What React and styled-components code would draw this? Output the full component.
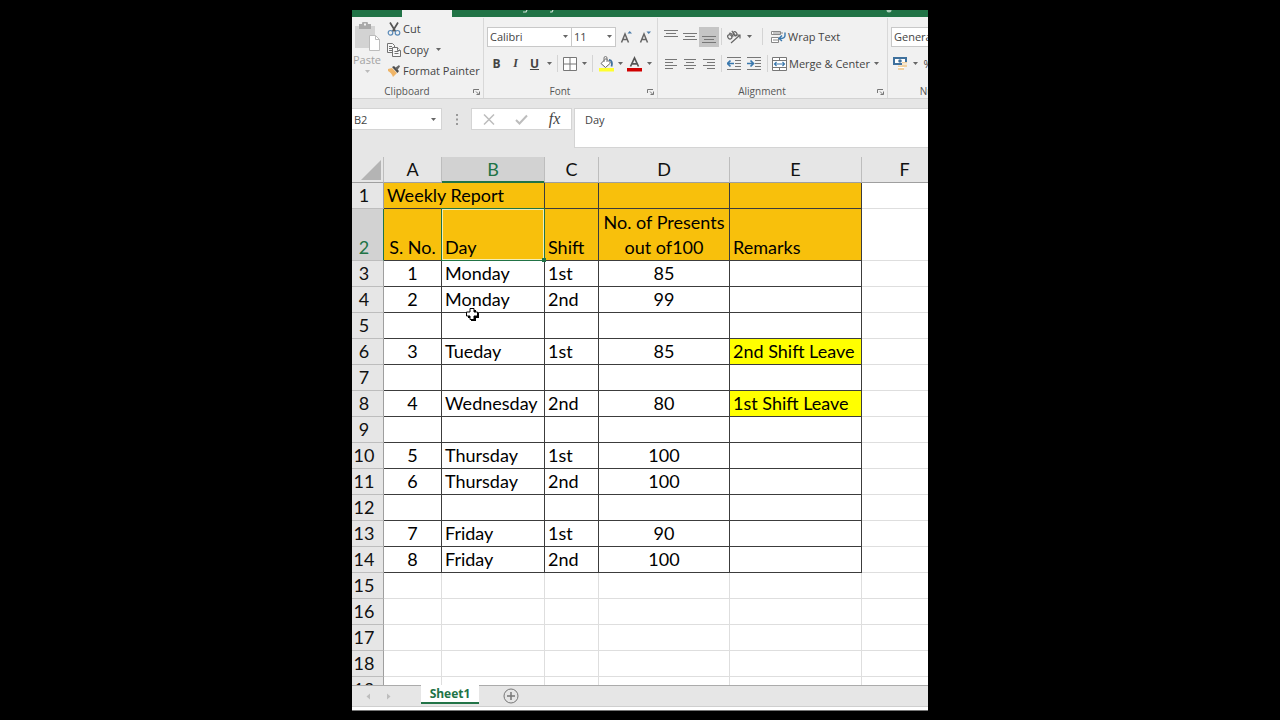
import React from 'react'
import styled, { createGlobalStyle, css } from 'styled-components'

const GlobalStyle = createGlobalStyle`
  * { box-sizing: border-box; }
  body { margin: 0; background: #000; }
  button, input, select { font: inherit; color: inherit; }
`

const Stage = styled.div`
  display: flex;
  justify-content: center;
  height: 100vh;
  padding: 10px 0 9px;
  background: #000;
`
const Window = styled.main`
  display: flex;
  flex-direction: column;
  width: 45%;
  overflow: hidden;
  background: #e6e6e6;
  color: #444;
  font-family: 'Open Sans', 'Noto Sans', sans-serif;
  font-size: 11px;
`

const TabStrip = styled.div`
  display: flex;
  flex: none;
  height: 7px;
  padding-left: 50px;
  background: #217346;
  overflow: hidden;
`
const ActiveTab = styled.div`
  width: 50px;
  background: #f1f1f1;
`
const StripMarks = styled.svg`
  flex: 1;
`

const Ribbon = styled.div`
  display: flex;
  flex: none;
  height: 82px;
  padding-top: 1px;
  background: #f1f1f1;
  border-bottom: 1px solid #d2d2d2;
  overflow: hidden;
`
const Group = styled.section`
  display: flex;
  flex: none;
  flex-direction: column;
  width: ${(p) => p.$width}px;
  height: 80px;
  border-right: 1px solid #d8d8d8;
`
const GroupBody = styled.div`
  display: flex;
  flex: 1;
  padding: 0 3px;
`
const GroupFooter = styled.div`
  display: flex;
  align-items: center;
  height: 13px;
  padding-right: 2px;
  line-height: 13px;
  font-size: 10px;
  color: #555;
`
const GroupLabel = styled.span`
  flex: 1;
  padding-right: 10px;
  text-align: center;
`
const Rows = styled.div`
  display: flex;
  flex: 1;
  flex-direction: column;
  padding-top: 5px;
`
const ToolRow = styled.div`
  display: flex;
  align-items: center;
  height: 27px;
`
const Tool = styled.button`
  display: flex;
  flex: none;
  align-items: center;
  justify-content: ${(p) => (p.$start ? 'flex-start' : 'center')};
  gap: 2px;
  width: ${(p) => (p.$width ? `${p.$width}px` : 'auto')};
  height: 20px;
  padding: 0;
  border: 0;
  background: ${(p) => (p.$on ? '#c5c5c5' : 'transparent')};
  white-space: nowrap;
`
const Letter = styled.span`
  font-family: ${(p) => (p.$serif ? "'Liberation Serif', serif" : 'inherit')};
  font-size: 12px;
  font-weight: 700;
  font-style: ${(p) => (p.$serif ? 'italic' : 'normal')};
  text-decoration: ${(p) => (p.$underline ? 'underline' : 'none')};
`
const Divider = styled.span`
  flex: none;
  width: 1px;
  height: 17px;
  margin: 0 ${(p) => p.$gap}px;
  background: #d4d4d4;
`
const PasteButton = styled.button`
  display: flex;
  flex-direction: column;
  align-items: center;
  width: 32px;
  margin-left: -4px;
  padding: 4px 0 0;
  border: 0;
  background: transparent;
  color: #a3a3a3;
  line-height: 18px;
`
const ClipList = styled.div`
  display: flex;
  flex-direction: column;
  padding-left: 4px;
`
const ClipButton = styled.button`
  display: flex;
  align-items: center;
  gap: 2px;
  height: 21px;
  padding: 0;
  border: 0;
  background: transparent;
  white-space: nowrap;
`
const ArrowGap = styled.span`
  display: flex;
  padding-left: 4px;
`

const SelectBox = styled.span`
  display: grid;
  flex: none;
  align-items: center;
  width: ${(p) => p.$width}px;
  height: 20px;
  background: #fff;
  border: 1px solid #c8c8c8;
  & + & { border-left: 0; }
  select, svg { grid-area: 1 / 1; }
  select {
    appearance: none;
    width: 100%;
    height: 18px;
    padding: 0 2px;
    border: 0;
    background: transparent;
  }
  svg { justify-self: end; margin-right: 2px; pointer-events: none; }
`

const FormulaRow = styled.div`
  display: flex;
  flex: none;
  align-items: flex-start;
  height: 58px;
  padding-top: 9px;
`
const NameBox = styled.div`
  display: flex;
  width: 90px;
  height: 22px;
  background: #fff;
  border: 1px solid #d4d4d4;
  border-left: 0;
  input {
    flex: 1;
    min-width: 0;
    padding: 0 2px;
    border: 0;
    background: transparent;
  }
`
const Dots = styled.span`
  display: flex;
  justify-content: center;
  align-items: center;
  width: 29px;
  height: 22px;
`
const FormulaTools = styled.div`
  display: flex;
  justify-content: space-around;
  width: 101px;
  height: 22px;
  background: #fff;
  border: 1px solid #d4d4d4;
`
const FxLabel = styled.span`
  font-family: 'Liberation Serif', serif;
  font-size: 16px;
  font-style: italic;
  line-height: 16px;
`
const FormulaInput = styled.input`
  flex: 1;
  min-width: 0;
  height: 40px;
  margin: 0 0 0 2px;
  padding: 0 10px 18px;
  border: 1px solid #d4d4d4;
  border-right: 0;
  background: #fff;
`

const SheetArea = styled.div`
  position: relative;
  flex: 1;
  min-height: 0;
  overflow: hidden;
  background: #fff;
`
const Sheet = styled.table`
  table-layout: fixed;
  width: max(100%, 596px);
  border-collapse: separate;
  border-spacing: 0;
  color: #000;
  font-family: Lato, 'Open Sans', sans-serif;
  font-size: 18px;
  line-height: 25px;
`
const ColHead = styled.th`
  height: 26px;
  padding: 0;
  font-weight: 400;
  background: ${(p) => (p.$active ? '#d2d2d2' : '#e6e6e6')};
  color: ${(p) => (p.$active ? '#217346' : '#111')};
  border-right: 1px solid #bdbdbd;
  border-bottom: 1px solid ${(p) => (p.$active ? '#217346' : '#9f9f9f')};
  box-shadow: ${(p) => (p.$active ? 'inset 0 -1px #217346' : 'none')};
`
const Corner = styled(ColHead)`
  svg { display: block; margin-left: 9px; }
`
const RowHead = styled.th`
  height: 26px;
  padding: 0 7px 0 0;
  font-weight: 400;
  vertical-align: bottom;
  background: ${(p) => (p.$active ? '#d2d2d2' : '#e6e6e6')};
  color: ${(p) => (p.$active ? '#217346' : '#111')};
  border-right: 1px solid ${(p) => (p.$active ? '#217346' : '#9f9f9f')};
  border-bottom: 1px solid #bdbdbd;
`
const Cell = styled.td`
  position: relative;
  height: 26px;
  padding: 0 3px;
  vertical-align: bottom;
  white-space: nowrap;
  text-align: ${(p) => (p.$center ? 'center' : 'left')};
  border-right: 1px solid #dedede;
  border-bottom: 1px solid #dedede;
  ${(p) => p.$boxed && css`
    border-color: #3c3c3c;
  `}
  ${(p) => p.$fill && css`
    background: ${p.$fill};
  `}
`
const HeadingRow = styled.tr`
  height: 52px;
`
const Selection = styled.span`
  position: absolute;
  z-index: 1;
  inset: -1px;
  border: 1px solid #217346;
  box-shadow: inset 0 0 0 1px #f3eeb4;
  &::after {
    content: '';
    position: absolute;
    right: -2px;
    bottom: -2px;
    width: 4px;
    height: 4px;
    background: #217346;
  }
`
const Cursor = styled.svg`
  position: absolute;
  z-index: 2;
  left: 113px;
  top: 150px;
`

const SheetBar = styled.div`
  display: flex;
  flex: none;
  align-items: flex-start;
  height: 22px;
  padding-left: 6px;
  background: #e6e6e6;
  border-top: 1px solid #ababab;
  border-bottom: 1px solid #cfcfcf;
`
const SheetNav = styled.button`
  display: flex;
  align-items: center;
  justify-content: center;
  width: 20px;
  height: 20px;
  padding: 0;
  border: 0;
  background: transparent;
`
const SheetTab = styled.button`
  width: 58px;
  height: 19px;
  margin: -1px 22px 0 23px;
  padding: 0;
  border: 0;
  border-bottom: 2px solid #217346;
  background: #fff;
  color: #217346;
  font-size: 12px;
  font-weight: 700;
  line-height: 16px;
`
const StatusEdge = styled.div`
  flex: none;
  height: 4px;
  background: #fff;
  border-bottom: 1px solid #777;
`

const Arrow = ({ color = '#666' }) => (
  <svg width="7" height="5" viewBox="0 0 7 5"><path d="M1 1h5L3.500 4z" fill={color} /></svg>
)

const Launcher = () => (
  <Tool $width={9} aria-label="More options">
    <svg width="8" height="8" viewBox="0 0 8 8" fill="none" stroke="#777">
      <path d="M.5 5V1.500H6M3 3.500l3 3M6.500 3.500v3h-3" />
    </svg>
  </Tool>
)

const PasteIcon = () => (
  <svg width="26" height="29" viewBox="0 0 26 29">
    <path d="M1 4h20v22H1z" fill="#d3d3d3" />
    <path d="M5 2h3a3 3 0 0 1 6 0h3v5H5z" fill="#a9a9a9" />
    <path d="M10 1.500h2v2h-2z" fill="#f1f1f1" />
    <path d="M15.500 13.500h6l4 4v11h-10z" fill="#fff" stroke="#bcbcbc" />
    <path d="M21.500 13.500v4h4" fill="none" stroke="#bcbcbc" />
  </svg>
)
const CutIcon = () => (
  <svg width="14" height="14" viewBox="0 0 14 14" fill="none">
    <path d="M3 0.500l5.500 9M11 .5l-5.500 9" stroke="#555" strokeWidth="1.700" />
    <circle cx="3.500" cy="10.800" r="2.300" stroke="#5a8ab8" strokeWidth="1.200" />
    <circle cx="10.500" cy="10.800" r="2.300" stroke="#5a8ab8" strokeWidth="1.200" />
  </svg>
)
const CopyIcon = () => (
  <svg width="14" height="14" viewBox="0 0 14 14" fill="#f8f8f8" stroke="#737373">
    <path d="M.5.5h5l2 2v7h-7z" />
    <path d="M2 3.500h3M2 5.500h3M2 7.500h3" />
    <path d="M5.500 4.500h5l3 3v6h-8z" />
    <path d="M10.500 4.500v3h3M7.500 8.500h4M7.500 10.500h4" />
  </svg>
)
const BrushIcon = () => (
  <svg width="14" height="14" viewBox="0 0 14 14">
    <path d="M1 5l4-1 5 5-4 4C5 10 3 8 1 7z" fill="#efb568" />
    <path d="M5 3l2-1 5 5-1.500 2z" fill="#4b4b4b" />
    <path d="M8 4l4-3 1 1.500-3 4z" fill="#666" />
  </svg>
)
const FontSizeIcon = ({ down }) => (
  <svg width="13" height="14" viewBox="0 0 13 14" fill="none">
    <path d="M1.500 12.500L5 4l3.500 8.500M2.700 9.500h4.600" stroke="#666" strokeWidth="1.500" />
    <path d={down ? 'M7.500 1.500h4.500L9.700 4z' : 'M7.500 3.500h4.500L9.700 1z'} fill="#4a7ba8" />
  </svg>
)
const BordersIcon = () => (
  <svg width="14" height="14" viewBox="0 0 14 14" fill="#fff" stroke="#777">
    <path d="M.5.5h13v13H.5zM7 .5v13M.5 7h13" />
  </svg>
)
const FillIcon = () => (
  <svg width="16" height="16" viewBox="0 0 16 16" fill="none">
    <path d="M3 7.500l5-5 4.500 4.500-5 4.500z" fill="#fff" stroke="#666" />
    <path d="M6 6V2a1.500 1.500 0 0 1 3 0v4" stroke="#777" />
    <path d="M11 4c3 0 3.500 3 2.500 6.500" stroke="#41719c" strokeWidth="1.800" />
    <path d="M1 12h15v3.500H1z" fill="#ffff2e" />
  </svg>
)
const FontColorIcon = () => (
  <svg width="15" height="16" viewBox="0 0 15 16" fill="none">
    <path d="M3.500 10.500L7.500 2l4 8.500M5 7.800h5" stroke="#555" strokeWidth="1.700" />
    <path d="M0 12h15v3.500H0z" fill="#d00000" />
  </svg>
)
const LinesIcon = ({ d }) => (
  <svg width="14" height="14" viewBox="0 0 14 14" stroke="#777"><path d={d} /></svg>
)
const OrientIcon = () => (
  <svg width="16" height="14" viewBox="0 0 16 14" fill="none" stroke="#666" strokeWidth="1.200">
    <ellipse cx="3.800" cy="6.800" rx="1.900" ry="2.300" transform="rotate(-40 3.800 6.800)" />
    <path d="M3 3.500c1.500-1 2.500 0 4.200 3.200M5.800.8l4 5" />
    <ellipse cx="9" cy="3.800" rx="1.700" ry="2.200" transform="rotate(-40 9 3.800)" />
    <path d="M5 13L14 5M14 8.500V5h-3.500" />
  </svg>
)
const IndentIcon = ({ right }) => (
  <svg width="14" height="13" viewBox="0 0 14 13" fill="none">
    <path d="M0 .5h14M8 3.500h6M8 6.500h6M8 9.500h6M0 12.500h14" stroke="#777" />
    <path d={right ? 'M0 6.500h6M3.500 3.500l3 3-3 3' : 'M7 6.500H1M3.500 3.500l-3 3 3 3'} stroke="#3a78ad" strokeWidth="1.700" />
  </svg>
)
const WrapIcon = () => (
  <svg width="15" height="14" viewBox="0 0 15 14" fill="none">
    <path d="M.5 1.500h9v3h-9zM.5 7.500h7v5h-7z" fill="#fff" stroke="#888" />
    <path d="M2 3h10M2 10h5" stroke="#888" />
    <path d="M14 2.500v3c0 2-1 3-5 3M11 5.500l-3 3 3 2.500" stroke="#3a78ad" strokeWidth="1.400" />
  </svg>
)
const MergeIcon = () => (
  <svg width="15" height="14" viewBox="0 0 15 14" fill="none">
    <path d="M.5.5h14v13H.5zM.5 3.500h14M.5 10.500h14M7.500.5v3M7.500 10.500v3" fill="#fff" stroke="#777" />
    <path d="M2 7h11M4.500 5L2.500 7l2 2M10.500 5l2 2-2 2" stroke="#3a78ad" strokeWidth="1.200" />
  </svg>
)
const MoneyIcon = () => (
  <svg width="15" height="15" viewBox="0 0 15 15" fill="none">
    <path d="M1 2h12v6H1z" fill="#fff" stroke="#3f719d" strokeWidth="2" />
    <circle cx="7" cy="5" r="1.800" fill="#3f719d" />
    <path d="M9 6h5v5H9zM5 9.500h6V14H5z" fill="#f0d0a0" />
    <path d="M9 8h5M5 11.500h6" stroke="#fff" />
  </svg>
)

const GOLD = '#f8c00c'
const YELLOW = '#ffff00'
const COLUMNS = ['A', 'B', 'C', 'D', 'E', 'F']
const WIDTHS = [32, 58, 103, 54, 131, 132]

// one entry per sheet row, from row 3 down: s. no., day, shift, presents, remarks
const RECORDS = [
  ['1', 'Monday', '1st', '85', ''],
  ['2', 'Monday', '2nd', '99', ''],
  ['', '', '', '', ''],
  ['3', 'Tueday', '1st', '85', '2nd Shift Leave'],
  ['', '', '', '', ''],
  ['4', 'Wednesday', '2nd', '80', '1st Shift Leave'],
  ['', '', '', '', ''],
  ['5', 'Thursday', '1st', '100', ''],
  ['6', 'Thursday', '2nd', '100', ''],
  ['', '', '', '', ''],
  ['7', 'Friday', '1st', '90', ''],
  ['8', 'Friday', '2nd', '100', ''],
]
const EMPTY_ROWS = [15, 16, 17, 18, 19]

const ClipboardGroup = () => (
  <Group $width={132}>
    <GroupBody>
      <PasteButton>
        <PasteIcon />
        Paste
        <Arrow color="#bbb" />
      </PasteButton>
      <ClipList>
        <ClipButton><CutIcon />Cut</ClipButton>
        <ClipButton><CopyIcon />Copy<ArrowGap><Arrow /></ArrowGap></ClipButton>
        <ClipButton><BrushIcon />Format Painter</ClipButton>
      </ClipList>
    </GroupBody>
    <GroupFooter><GroupLabel>Clipboard</GroupLabel><Launcher /></GroupFooter>
  </Group>
)

const FontGroup = () => (
  <Group $width={174}>
    <GroupBody>
      <Rows>
        <ToolRow>
          <SelectBox $width={85}>
            <select aria-label="Font"><option>Calibri</option></select>
            <Arrow />
          </SelectBox>
          <SelectBox $width={44}>
            <select aria-label="Font size"><option>11</option></select>
            <Arrow />
          </SelectBox>
          <Tool $width={20} aria-label="Increase font size"><FontSizeIcon /></Tool>
          <Tool $width={18} aria-label="Decrease font size"><FontSizeIcon down /></Tool>
        </ToolRow>
        <ToolRow>
          <Tool $width={19}><Letter>B</Letter></Tool>
          <Tool $width={19}><Letter $serif>I</Letter></Tool>
          <Tool $width={19}><Letter $underline>U</Letter></Tool>
          <Tool $width={10} aria-label="Underline styles"><Arrow /></Tool>
          <Divider $gap={3} />
          <Tool $width={18} aria-label="Borders"><BordersIcon /></Tool>
          <Tool $width={10} aria-label="Border styles"><Arrow /></Tool>
          <Divider $gap={3} />
          <Tool $width={19} aria-label="Fill color"><FillIcon /></Tool>
          <Tool $width={10} aria-label="Fill colors"><Arrow /></Tool>
          <Tool $width={19} aria-label="Font color"><FontColorIcon /></Tool>
          <Tool $width={10} aria-label="Font colors"><Arrow /></Tool>
        </ToolRow>
      </Rows>
    </GroupBody>
    <GroupFooter><GroupLabel>Font</GroupLabel><Launcher /></GroupFooter>
  </Group>
)

const AlignmentGroup = () => (
  <Group $width={230}>
    <GroupBody>
      <Rows>
        <ToolRow>
          <Tool $width={19} aria-label="Top align"><LinesIcon d="M0 .5h14M2 3.500h10M0 6.500h14" /></Tool>
          <Tool $width={19} aria-label="Middle align"><LinesIcon d="M0 3.500h14M2 6.500h10M0 9.500h14" /></Tool>
          <Tool $width={20} $on aria-label="Bottom align"><LinesIcon d="M0 6.500h14M2 9.500h10M0 12.500h14" /></Tool>
          <Divider $gap={2} />
          <Tool $width={20} aria-label="Orientation"><OrientIcon /></Tool>
          <Tool $width={10} aria-label="Orientation styles"><Arrow /></Tool>
          <Divider $gap={8} />
          <Tool $start><WrapIcon />Wrap Text</Tool>
        </ToolRow>
        <ToolRow>
          <Tool $width={19} aria-label="Align left"><LinesIcon d="M1 2.500h12M1 5.500h8M1 8.500h12M1 11.500h8" /></Tool>
          <Tool $width={19} aria-label="Center"><LinesIcon d="M1 2.500h12M3 5.500h8M1 8.500h12M3 11.500h8" /></Tool>
          <Tool $width={20} aria-label="Align right"><LinesIcon d="M1 2.500h12M5 5.500h8M1 8.500h12M5 11.500h8" /></Tool>
          <Divider $gap={2} />
          <Tool $width={20} aria-label="Decrease indent"><IndentIcon /></Tool>
          <Tool $width={19} aria-label="Increase indent"><IndentIcon right /></Tool>
          <Divider $gap={4} />
          <Tool $start><MergeIcon />Merge &amp; Center</Tool>
          <Tool $width={14} aria-label="Merge options"><Arrow /></Tool>
        </ToolRow>
      </Rows>
    </GroupBody>
    <GroupFooter><GroupLabel>Alignment</GroupLabel><Launcher /></GroupFooter>
  </Group>
)

const NumberGroup = () => (
  <Group $width={124}>
    <GroupBody>
      <Rows>
        <ToolRow>
          <SelectBox $width={96}>
            <select aria-label="Number format"><option>General</option></select>
            <Arrow />
          </SelectBox>
        </ToolRow>
        <ToolRow>
          <Tool $width={18} aria-label="Accounting format"><MoneyIcon /></Tool>
          <Tool $width={12} aria-label="Currencies"><Arrow /></Tool>
          <Tool $width={14}>%</Tool>
        </ToolRow>
      </Rows>
    </GroupBody>
    <GroupFooter><GroupLabel>Number</GroupLabel><Launcher /></GroupFooter>
  </Group>
)

const FormulaBar = () => (
  <FormulaRow>
    <NameBox>
      <input aria-label="Name box" defaultValue="B2" />
      <Tool $width={16} aria-label="Names"><Arrow /></Tool>
    </NameBox>
    <Dots>
      <svg width="2" height="11" viewBox="0 0 2 11" fill="#999">
        <path d="M0 0h2v2H0zM0 4.500h2v2H0zM0 9h2v2H0z" />
      </svg>
    </Dots>
    <FormulaTools>
      <Tool $width={20} aria-label="Cancel">
        <svg width="12" height="11" viewBox="0 0 12 11" stroke="#bdbdbd" strokeWidth="1.500"><path d="M1 .5l10 10M11 .5l-10 10" /></svg>
      </Tool>
      <Tool $width={20} aria-label="Enter">
        <svg width="13" height="11" viewBox="0 0 13 11" fill="none" stroke="#bdbdbd" strokeWidth="2"><path d="M1 6l3.500 3.500L12 1.500" /></svg>
      </Tool>
      <Tool $width={20} aria-label="Insert function"><FxLabel>fx</FxLabel></Tool>
    </FormulaTools>
    <FormulaInput aria-label="Formula" defaultValue="Day" />
  </FormulaRow>
)

const SheetGrid = () => (
  <Sheet>
    <colgroup>
      {WIDTHS.map((w, i) => <col key={i} width={w} />)}
      <col />
    </colgroup>
    <thead>
      <tr>
        <Corner>
          <svg width="20" height="20" viewBox="0 0 20 20"><path d="M20 0v20H0z" fill="#b4b4b4" /></svg>
        </Corner>
        {COLUMNS.map((c) => <ColHead key={c} $active={c === 'B'}>{c}</ColHead>)}
      </tr>
    </thead>
    <tbody>
      <tr>
        <RowHead>1</RowHead>
        <Cell $boxed $fill={GOLD} colSpan={2}>Weekly Report</Cell>
        <Cell $boxed $fill={GOLD} />
        <Cell $boxed $fill={GOLD} />
        <Cell $boxed $fill={GOLD} />
        <Cell />
      </tr>
      <HeadingRow>
        <RowHead $active>2</RowHead>
        <Cell $boxed $fill={GOLD} $center>S. No.</Cell>
        <Cell $boxed $fill={GOLD}>Day<Selection /></Cell>
        <Cell $boxed $fill={GOLD}>Shift</Cell>
        <Cell $boxed $fill={GOLD} $center>No. of Presents<br />out of100</Cell>
        <Cell $boxed $fill={GOLD}>Remarks</Cell>
        <Cell />
      </HeadingRow>
      {RECORDS.map(([no, day, shift, presents, remarks], i) => (
        <tr key={i}>
          <RowHead>{i + 3}</RowHead>
          <Cell $boxed $center>{no}</Cell>
          <Cell $boxed>{day}</Cell>
          <Cell $boxed>{shift}</Cell>
          <Cell $boxed $center>{presents}</Cell>
          <Cell $boxed $fill={remarks && YELLOW}>{remarks}</Cell>
          <Cell />
        </tr>
      ))}
      {EMPTY_ROWS.map((n) => (
        <tr key={n}>
          <RowHead>{n}</RowHead>
          {COLUMNS.map((c) => <Cell key={c} />)}
        </tr>
      ))}
    </tbody>
  </Sheet>
)

const App = () => {
  return (
    <>
      <GlobalStyle />
      <Stage>
        <Window>
          <TabStrip>
            <ActiveTab />
            <StripMarks height="7">
              <path d="M71 2h3l1-2M98 2h2l1-2" fill="none" stroke="#cfe3d7" strokeWidth="1.200" />
              <circle cx="437" cy="0" r="2.500" fill="#a8cdb8" />
            </StripMarks>
          </TabStrip>
          <Ribbon>
            <ClipboardGroup />
            <FontGroup />
            <AlignmentGroup />
            <NumberGroup />
          </Ribbon>
          <FormulaBar />
          <SheetArea>
            <SheetGrid />
            <Cursor width="15" height="15" viewBox="0 0 15 15">
              <path d="M5 2h5v3h3v5h-3v3H5v-3H2V5h3z" transform="translate(1 1)" fill="#000" />
              <path d="M5 1.500h4v3.500h3.500v4H9v3.500H5V9H1.500V5H5z" fill="#fff" stroke="#000" />
            </Cursor>
          </SheetArea>
          <SheetBar>
            <SheetNav aria-label="Previous sheet">
              <svg width="5" height="7" viewBox="0 0 5 7"><path d="M4 .5v6L.5 3.500z" fill="#bdbdbd" /></svg>
            </SheetNav>
            <SheetNav aria-label="Next sheet">
              <svg width="5" height="7" viewBox="0 0 5 7"><path d="M1 .5v6l3.500-3z" fill="#bdbdbd" /></svg>
            </SheetNav>
            <SheetTab>Sheet1</SheetTab>
            <SheetNav aria-label="New sheet">
              <svg width="16" height="16" viewBox="0 0 16 16" fill="none" stroke="#777">
                <circle cx="8" cy="8" r="7" />
                <path d="M8 4v8M4 8h8" strokeWidth="1.500" />
              </svg>
            </SheetNav>
          </SheetBar>
          <StatusEdge />
        </Window>
      </Stage>
    </>
  )
}

export default App
